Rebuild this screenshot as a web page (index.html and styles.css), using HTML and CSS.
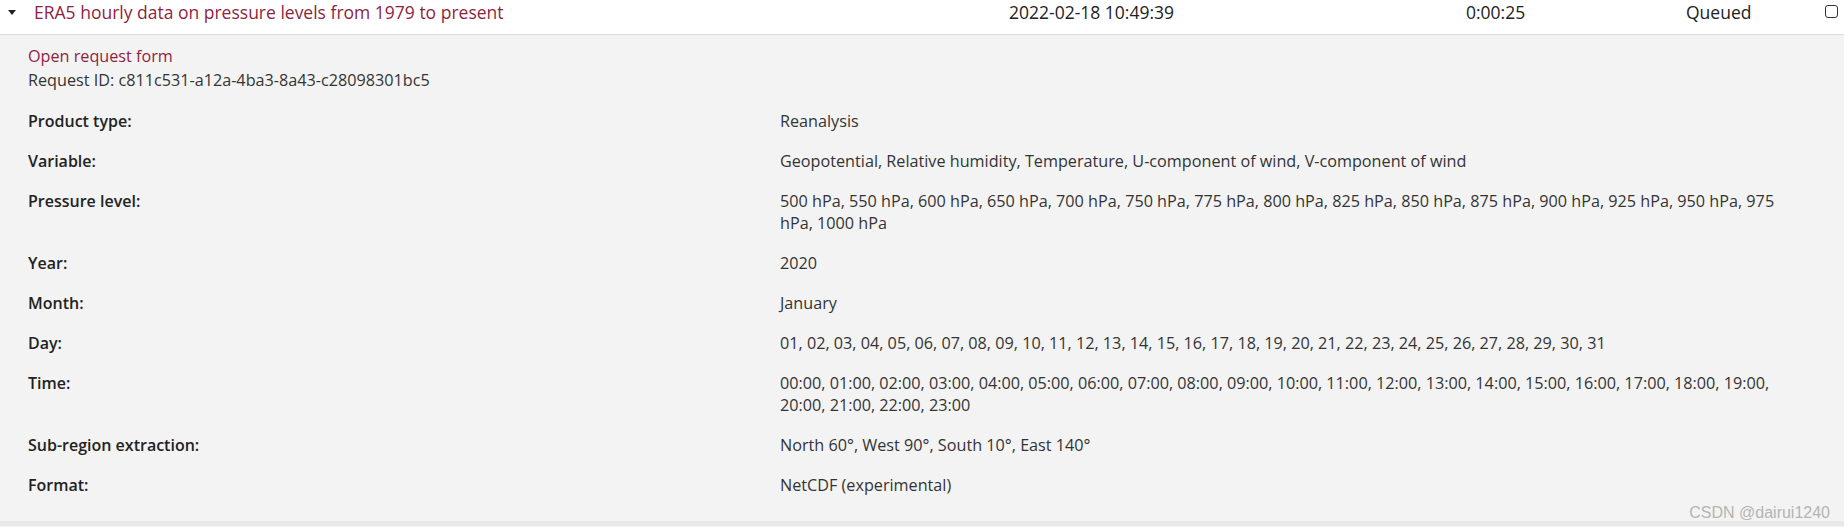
FILE: index.html
```html
<!DOCTYPE html>
<html lang="en">
<head>
<meta charset="utf-8">
<title>Requests</title>
<link rel="stylesheet" href="styles.css">
</head>
<body>
<div class="request">
  <div class="request-head">
    <span class="caret"></span>
    <a class="title" href="#">ERA5 hourly data on pressure levels from 1979 to present</a>
    <span class="date">2022-02-18 10:49:39</span>
    <span class="duration">0:00:25</span>
    <span class="status">Queued</span>
    <input class="check" type="checkbox">
  </div>
  <div class="request-body">
    <a class="form-link" href="#">Open request form</a>
    <div class="req-id">Request ID: c811c531-a12a-4ba3-8a43-c28098301bc5</div>
    <dl class="params">
      <dt>Product type:</dt><dd>Reanalysis</dd>
      <dt>Variable:</dt><dd>Geopotential, Relative humidity, Temperature, U-component of wind, V-component of wind</dd>
      <dt>Pressure level:</dt><dd>500 hPa, 550 hPa, 600 hPa, 650 hPa, 700 hPa, 750 hPa, 775 hPa, 800 hPa, 825 hPa, 850 hPa, 875 hPa, 900 hPa, 925 hPa, 950 hPa, 975 hPa, 1000 hPa</dd>
      <dt>Year:</dt><dd>2020</dd>
      <dt>Month:</dt><dd>January</dd>
      <dt>Day:</dt><dd>01, 02, 03, 04, 05, 06, 07, 08, 09, 10, 11, 12, 13, 14, 15, 16, 17, 18, 19, 20, 21, 22, 23, 24, 25, 26, 27, 28, 29, 30, 31</dd>
      <dt>Time:</dt><dd>00:00, 01:00, 02:00, 03:00, 04:00, 05:00, 06:00, 07:00, 08:00, 09:00, 10:00, 11:00, 12:00, 13:00, 14:00, 15:00, 16:00, 17:00, 18:00, 19:00, 20:00, 21:00, 22:00, 23:00</dd>
      <dt>Sub-region extraction:</dt><dd>North 60°, West 90°, South 10°, East 140°</dd>
      <dt>Format:</dt><dd>NetCDF (experimental)</dd>
    </dl>
    <div class="watermark">CSDN @dairui1240</div>
  </div>
</div>
</body>
</html>
```

FILE: styles.css
```css
html, body {
  margin: 0;
  padding: 0;
  background: #f3f3f3;
}
body {
  font-family: "Open Sans", "Noto Sans", sans-serif;
  color: #333;
  width: 1844px;
  height: 527px;
  overflow: hidden;
}
.request {
  border-bottom: 5px solid #e8e8e8;
}
.request-head {
  display: flex;
  align-items: flex-start;
  height: 34px;
  background: #fff;
  border-bottom: 1px solid #dcdcdc;
  font-size: 17.5px;
  line-height: 24px;
}
.caret {
  width: 0;
  height: 0;
  border-left: 4.5px solid transparent;
  border-right: 4.5px solid transparent;
  border-top: 5px solid #222;
  margin: 10px 18px 0 8px;
}
.title {
  color: #8e1f40;
  text-decoration: none;
  width: 975px;
  white-space: nowrap;
}
.date {
  width: 457px;
  color: #222;
}
.duration {
  width: 220px;
  color: #222;
}
.status {
  width: 139px;
  color: #222;
}
.check {
  appearance: none;
  -webkit-appearance: none;
  box-sizing: border-box;
  margin: 5px 0 0;
  width: 13px;
  height: 13px;
  border: 1.5px solid #333;
  border-radius: 3px;
  background: #fff;
}
.request-body {
  position: relative;
  padding: 9px 54px 25px 28px;
  font-size: 16.2px;
  line-height: 24px;
}
.form-link {
  display: block;
  color: #8e1f40;
  text-decoration: none;
}
.req-id {
  color: #333;
}
.params {
  display: grid;
  grid-template-columns: 752px 1fr;
  row-gap: 18px;
  margin: 18px 0 0;
  line-height: 22px;
}
.params dt {
  font-size: 16px;
  font-weight: 600;
  color: #222;
}
.params dd {
  margin: 0;
  color: #333;
}
.watermark {
  position: absolute;
  right: 14px;
  bottom: 0;
  font-family: "Liberation Sans", sans-serif;
  font-size: 16px;
  line-height: 16px;
  color: #b4b4b4;
}
```
